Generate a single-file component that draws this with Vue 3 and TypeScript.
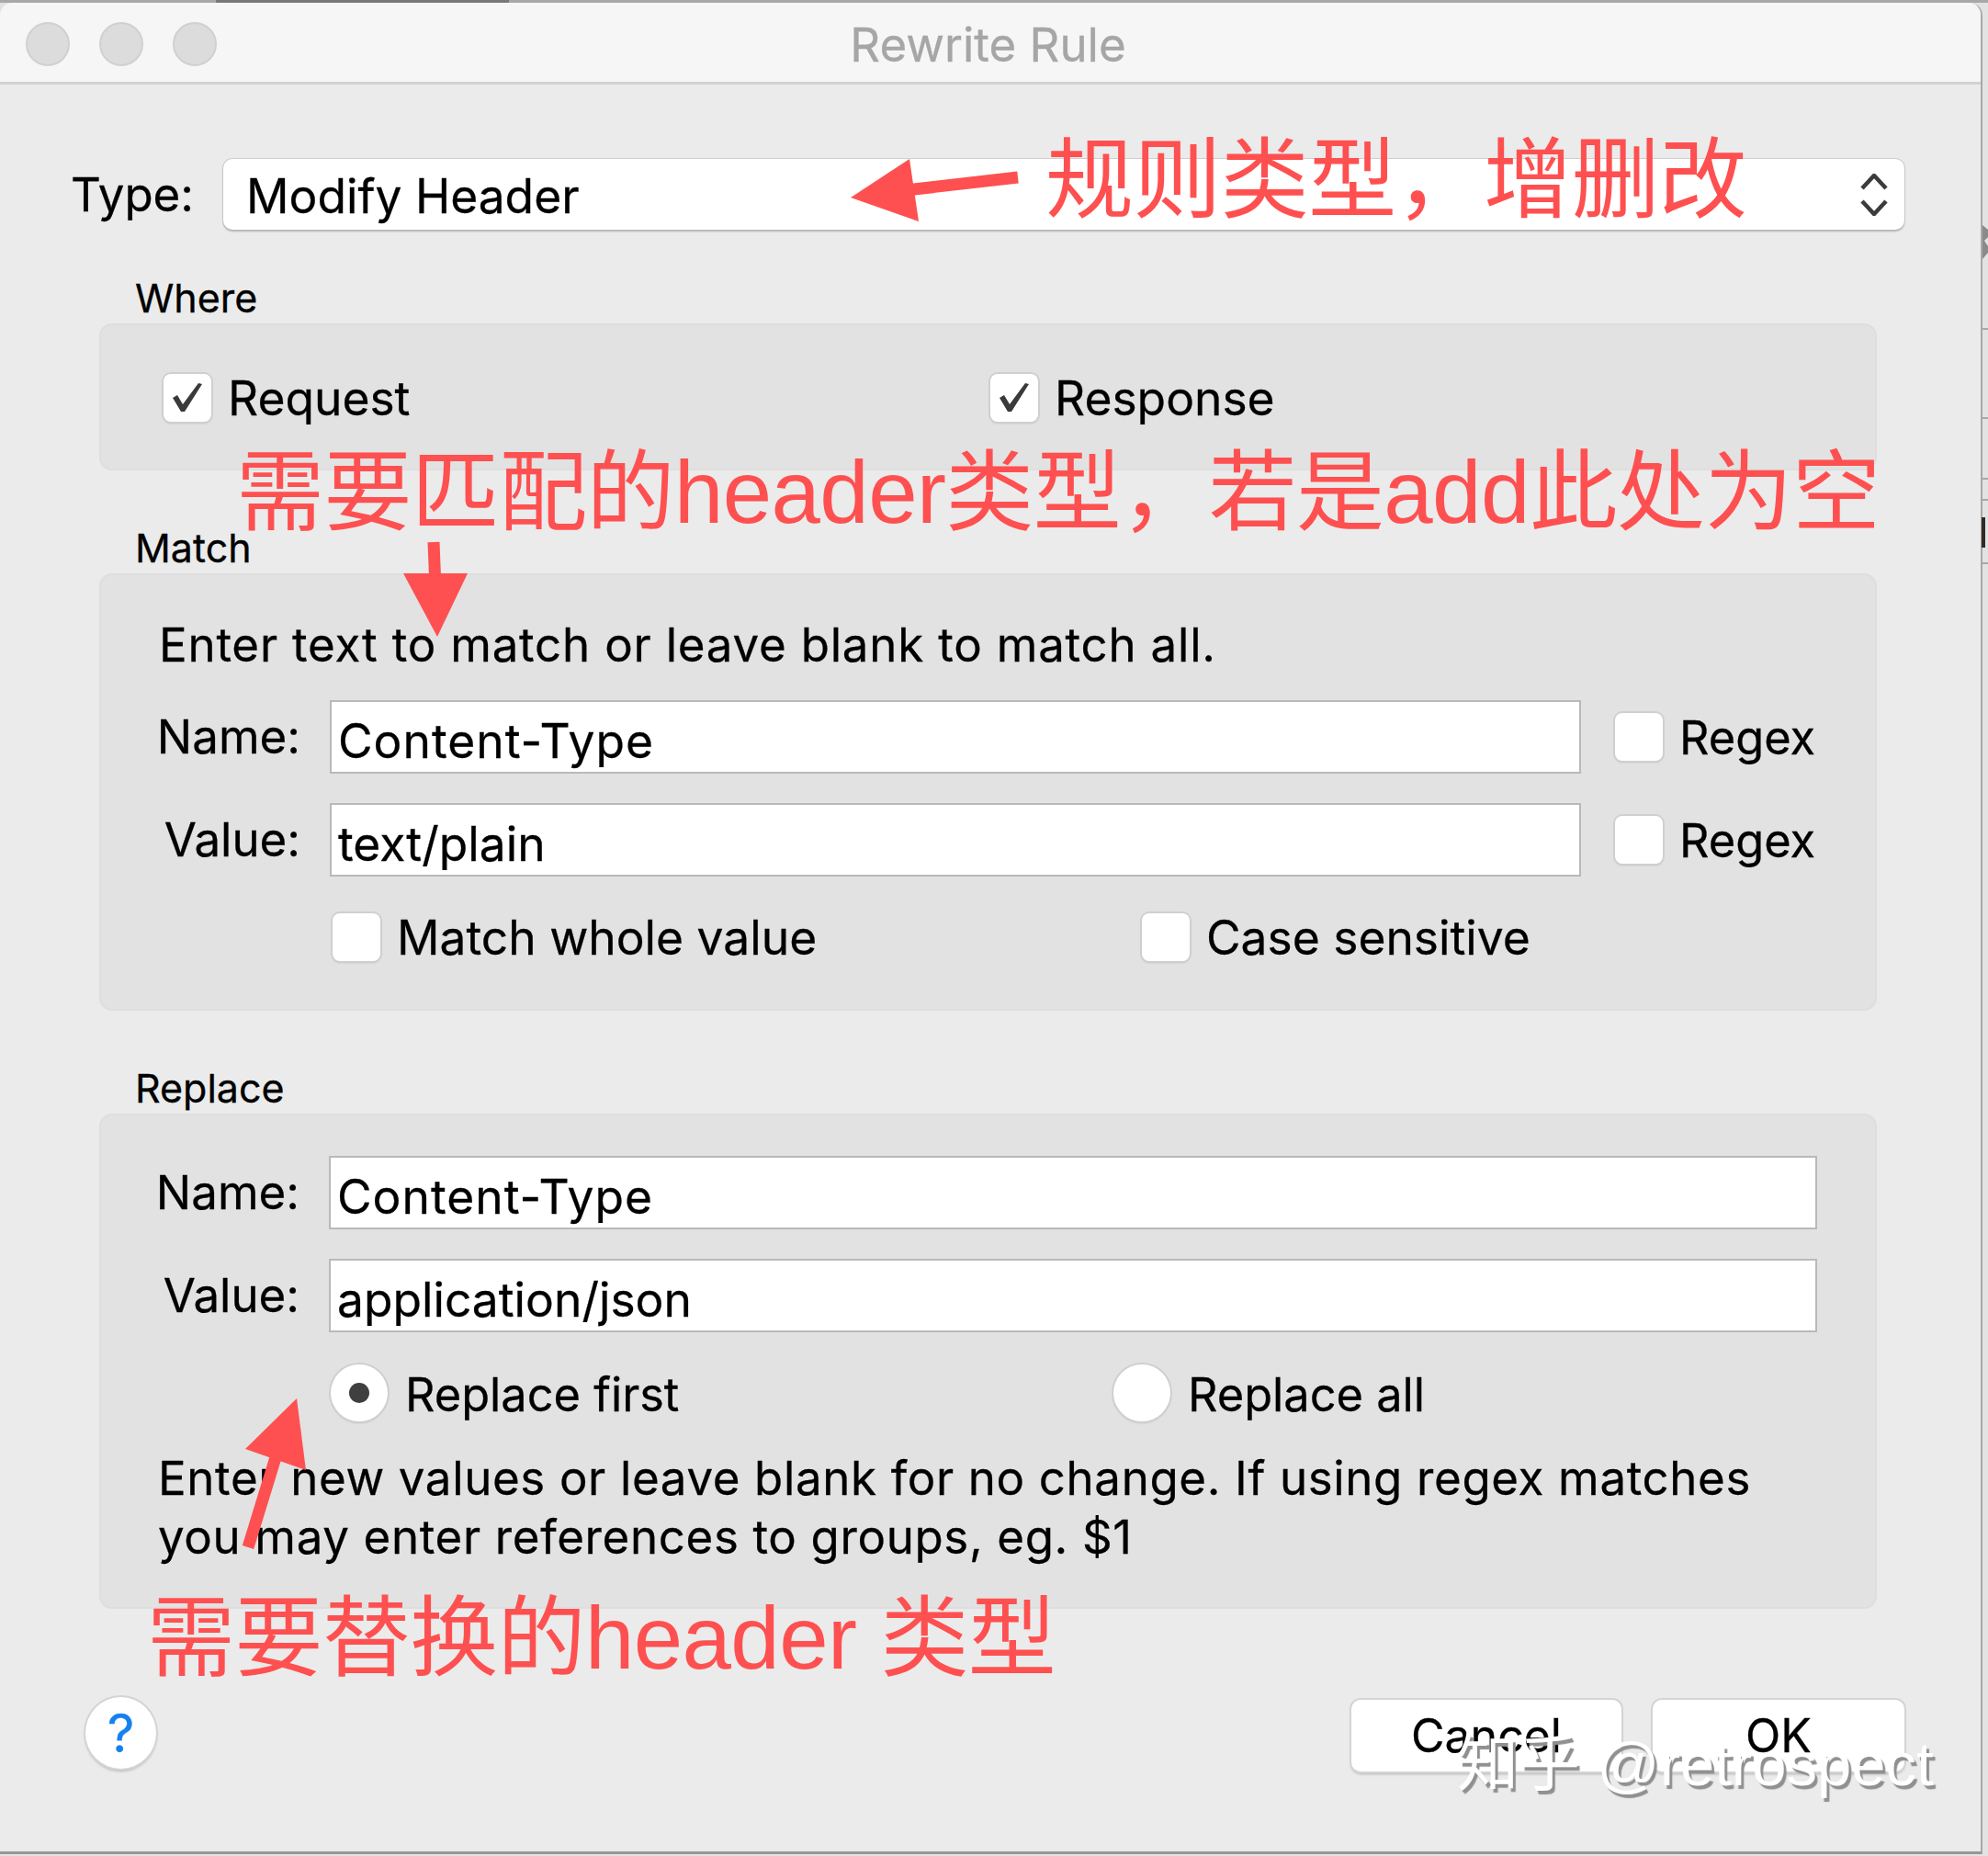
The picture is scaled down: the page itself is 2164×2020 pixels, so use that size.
<script setup lang="ts">
const arrows = [
  { tail: 'M1108 193 L960 210', head: '926,215 990,173 1000,241' },
  { tail: 'M472 590 L474 640', head: '476,693 439,624 509,624' },
  { tail: 'M270 1684 L305 1570', head: '323,1522 267,1577 333,1600' },
]
const edgeLines = [357, 454, 520, 543, 612]
const tick = 'M2 18 L7 15 L13 25 L30 2 L34 3 L15 33 L11 33 Z'
</script>

<template>
  <div class="page">
    <div class="window">
      <header class="titlebar">
        <div class="lights"><i></i><i></i><i></i></div>
        <div class="title">Rewrite Rule</div>
      </header>
      <main class="content">
        <div class="type-row">
          <span class="type-label">Type:</span>
          <div class="select">
            <span>Modify Header</span>
            <svg class="updown" width="30" height="46" viewBox="0 0 30 46" fill="none" stroke="#3c3c3c" stroke-width="4.5">
              <path d="M2 16 L15 2 L28 16" />
              <path d="M2 30 L15 44 L28 30" />
            </svg>
          </div>
        </div>

        <div class="legend where-legend">Where</div>
        <section class="group where">
          <label class="check-item item-a"><span class="check"><svg width="36" height="36" viewBox="0 0 36 36"><path :d="tick" fill="#3a3a3a" /></svg></span>Request</label>
          <label class="check-item item-b"><span class="check"><svg width="36" height="36" viewBox="0 0 36 36"><path :d="tick" fill="#3a3a3a" /></svg></span>Response</label>
        </section>

        <div class="legend match-legend">Match</div>
        <section class="group match">
          <p class="hint">Enter text to match or leave blank to match all.</p>
          <div class="field-row">
            <span class="field-label">Name:</span>
            <div class="input wide">Content-Type</div>
            <label class="check-item regex"><span class="check"></span>Regex</label>
          </div>
          <div class="field-row">
            <span class="field-label">Value:</span>
            <div class="input">text/plain</div>
            <label class="check-item regex"><span class="check"></span>Regex</label>
          </div>
          <div class="options">
            <label class="check-item opt-a"><span class="check"></span>Match whole value</label>
            <label class="check-item"><span class="check"></span>Case sensitive</label>
          </div>
        </section>

        <div class="legend replace-legend">Replace</div>
        <section class="group replace">
          <div class="field-row">
            <span class="field-label">Name:</span>
            <div class="input wide">Content-Type</div>
          </div>
          <div class="field-row">
            <span class="field-label">Value:</span>
            <div class="input">application/json</div>
          </div>
          <div class="radios">
            <label class="radio-item opt-r"><span class="radio on"><i></i></span><span class="lbl">Replace first</span></label>
            <label class="radio-item"><span class="radio"></span><span class="lbl">Replace all</span></label>
          </div>
          <p class="para">Enter new values or leave blank for no change. If using regex matches<br />you may enter references to groups, eg. $1</p>
        </section>

        <footer class="actions">
          <button class="help">?</button>
          <button class="btn cancel">Cancel</button>
          <button class="btn ok">OK</button>
        </footer>
      </main>
    </div>

    <svg class="arrows" width="2164" height="2020" viewBox="0 0 2164 2020">
      <g v-for="(a, i) in arrows" :key="i">
        <path :d="a.tail" stroke="#fe5050" stroke-width="13" fill="none" />
        <polygon :points="a.head" fill="#fe5050" />
      </g>
      <polygon points="2158,245 2164,250 2164,258 2160,262 2164,268 2164,275 2158,282" fill="#8a8a8a" />
      <rect v-for="y in edgeLines" :key="y" x="2158" :y="y" width="6" height="2" fill="#a8a8a8" />
      <rect x="2157" y="563" width="4" height="33" fill="#332a26" />
    </svg>
    <div class="note note1">规则类型，增删改</div>
    <div class="note note2">需要匹配的header类型，若是add此处为空</div>
    <div class="note note3">需要替换的header 类型</div>
    <div class="watermark">知乎 @retrospect</div>
  </div>
</template>

<style>
html, body { margin: 0; background: #fff; }
</style>

<style scoped>
.page {
  position: relative;
  width: 2164px;
  height: 2020px;
  overflow: hidden;
  background: #e3e3e3;
  font-family: Inter, "Noto Sans CJK SC", sans-serif;
  color: #000;
  -webkit-text-stroke: 0.3px currentColor;
}
.page::before {
  content: "";
  position: absolute;
  left: 0;
  top: 0;
  width: 100%;
  height: 3px;
  background: linear-gradient(90deg, #a8a8a8 235px, #787878 235px, #787878 554px, #a8a8a8 554px);
}
.window {
  width: 2158px;
  height: 2015px;
  margin-top: 3px;
  background: #ebebeb;
  border-radius: 14px 14px 0 0;
  border-bottom: 3px solid #979797;
  border-right: 2px solid #a8a8a8;
  box-sizing: border-box;
  display: flex;
  flex-direction: column;
  overflow: hidden;
}
.titlebar {
  height: 89px;
  flex: none;
  background: #f6f6f6;
  border-bottom: 3px solid #d2d2d2;
  box-sizing: border-box;
  display: flex;
  align-items: center;
  justify-content: center;
  position: relative;
}
.lights {
  position: absolute;
  left: 28px;
  top: 21px;
  display: flex;
  gap: 32px;
}
.lights i {
  width: 48px;
  height: 48px;
  border-radius: 50%;
  background: #dcdcdc;
  border: 2px solid #d0d0d0;
  box-sizing: border-box;
}
.title {
  font-size: 51px;
  color: #a6a6a6;
  padding: 5px 5px 0 0;
}
.content {
  padding: 80px 0 0 0;
  font-size: 51.5px;
  display: flex;
  flex-direction: column;
}
.type-row {
  display: flex;
  align-items: center;
  height: 79px;
  margin: 0 83px 0 77px;
}
.type-label { width: 166px; flex: none; font-size: 51px; }
.select {
  flex: 1;
  height: 77px;
  background: #fff;
  border-radius: 10px;
  box-shadow: 0 2px 2px #b4b4b4, 0 0 0 1px #cfcfcf;
  display: flex;
  align-items: center;
  justify-content: space-between;
  padding: 3px 18px 0 25px;
  box-sizing: border-box;
}
.updown { margin-top: -3px; }
.legend {
  font-size: 43px;
  line-height: 54px;
  margin-left: 147px;
}
.where-legend { margin-top: 46px; }
.match-legend { margin-top: 57px; }
.replace-legend { margin-top: 57px; }
.group {
  margin: 1px 0 0 108px;
  width: 1935px;
  background: #e2e2e2;
  border: 2px solid #dedede;
  border-radius: 14px;
  box-sizing: border-box;
  position: relative;
}
.where {
  height: 160px;
  display: flex;
  padding: 51px 0 0 68px;
}
.item-a { width: 900px; }
.check-item {
  display: flex;
  align-items: center;
  height: 56px;
  flex: none;
}
.check {
  width: 52px;
  height: 52px;
  flex: none;
  background: #fff;
  border-radius: 8px;
  box-shadow: 0 0 0 2px #cfcfcf, 0 2px 2px #bdbdbd;
  margin-right: 18px;
  display: flex;
  align-items: center;
  justify-content: center;
}
.match {
  height: 476px;
  padding: 0 0 0 63px;
}
.hint {
  margin: 0;
  height: 136px;
  line-height: 152px;
  font-size: 51px;
  letter-spacing: 0.8px;
}
.field-row {
  display: flex;
  align-items: center;
  height: 80px;
  margin-bottom: 32px;
}
.field-label {
  width: 157px;
  flex: none;
  text-align: right;
  margin-right: 32px;
  margin-left: -3px;
  padding-bottom: 2px;
  font-size: 51px;
}
.input {
  height: 80px;
  line-height: 84px;
  background: #fff;
  border: 2px solid #b9b9b9;
  box-sizing: border-box;
  padding-left: 7px;
  flex: 1;
}
.wide { letter-spacing: 1px; }
.match .input { flex: none; width: 1362px; }
.regex { margin-left: 37px; font-size: 50.5px; }
.options {
  display: flex;
  padding-left: 189px;
  margin-top: 38px;
}
.opt-a { width: 881px; }
.replace {
  height: 539px;
  padding: 44px 63px 0 62px;
}
.radios {
  display: flex;
  padding-left: 188px;
  margin-top: 34px;
  font-size: 50.5px;
}
.opt-r { width: 852px; }
.radio-item {
  display: flex;
  align-items: center;
  height: 64px;
  flex: none;
}
.lbl { padding-top: 2px; }
.radio {
  width: 62px;
  height: 62px;
  border-radius: 50%;
  background: #fff;
  box-shadow: 0 0 0 2px #cfcfcf, 0 2px 2px #bdbdbd;
  margin-right: 19px;
  display: flex;
  align-items: center;
  justify-content: center;
}
.radio i {
  width: 22px;
  height: 22px;
  border-radius: 50%;
  background: #3f3f3f;
}
.para {
  margin: 29px 0 0 0;
  line-height: 64px;
  font-size: 51px;
  letter-spacing: 0.65px;
}
.actions {
  display: flex;
  align-items: flex-start;
  margin: 99px 83px 0 93px;
}
.help {
  width: 77px;
  height: 78px;
  margin-top: -3px;
  padding: 0;
  border: none;
  border-radius: 50%;
  background: #fff;
  box-shadow: 0 0 0 2px #d4d4d4, 0 3px 3px #b4b4b4;
  color: #1481ef;
  font: 58px Inter, sans-serif;
}
.btn {
  height: 78px;
  padding: 0;
  border: none;
  border-radius: 10px;
  background: #fff;
  box-shadow: 0 0 0 2px #d4d4d4, 0 3px 3px #b4b4b4;
  color: #000;
  font: 50px Inter, sans-serif;
}
.cancel { width: 294px; margin-left: auto; }
.ok { width: 274px; margin-left: 34px; }
.arrows {
  position: absolute;
  left: 0;
  top: 0;
  pointer-events: none;
}
.note {
  position: absolute;
  color: #fe5050;
  font-family: "Liberation Sans", "Noto Sans CJK SC", sans-serif;
  font-size: 96px;
  line-height: 110px;
  letter-spacing: -0.6px;
  white-space: nowrap;
  -webkit-text-stroke: 0;
}
.note1 { left: 1138px; top: 141px; }
.note2 { left: 257px; top: 481px; }
.note3 { left: 160px; top: 1728px; }
.watermark {
  position: absolute;
  left: 1586px;
  top: 1881px;
  font-size: 67px;
  line-height: 78px;
  font-family: "Liberation Sans", "Noto Sans CJK SC", sans-serif;
  color: #fff;
  text-shadow: 3px 4px 1px #909090;
  white-space: nowrap;
  -webkit-text-stroke: 0;
}
</style>
